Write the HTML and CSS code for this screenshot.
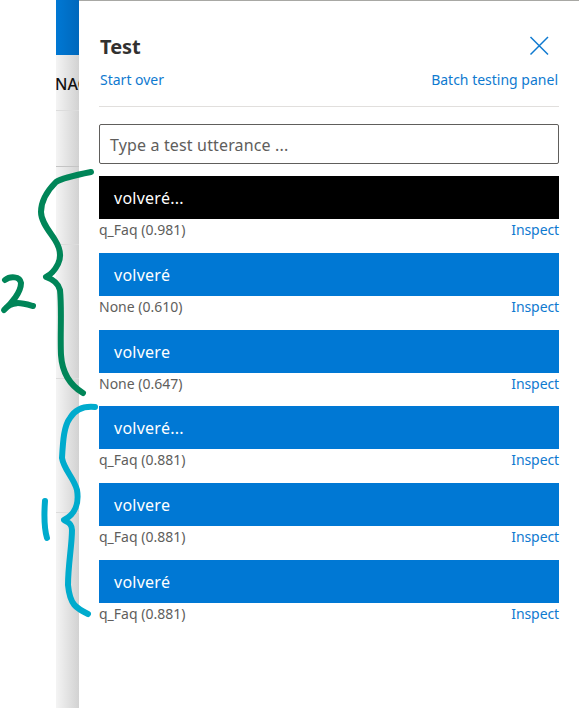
FILE: index.html
```html
<!DOCTYPE html>
<html lang="en">
<head>
<meta charset="utf-8">
<title>Test panel</title>
<link rel="stylesheet" href="styles.css">
</head>
<body>
<div class="page">
  <div class="gutter"></div>
  <div class="strip">
    <div class="strip-blue"></div>
    <div class="strip-nav"><span>NAGE</span></div>
    <div class="strip-row r1"></div>
    <div class="strip-row r2"></div>
    <div class="strip-row r3"></div>
    <div class="strip-row r4"></div>
    <div class="strip-row r5"></div>
  </div>
  <main class="panel">
    <div class="head">
      <div class="title-row">
        <h1 class="title">Test</h1>
        <svg class="close" viewBox="0 0 20 20" width="20" height="20" aria-label="Close"><path d="M1.5 1 L19 18.5 M19 1 L1.5 18.5"/></svg>
      </div>
      <div class="links">
        <a class="link">Start over</a>
        <a class="link">Batch testing panel</a>
      </div>
    </div>
    <div class="field">Type a test utterance ...</div>
    <div class="results">
      <div class="result"><div class="band dark">volveré...</div><div class="meta"><span>q_Faq (0.981)</span><a class="link">Inspect</a></div></div>
      <div class="result"><div class="band">volveré</div><div class="meta"><span>None (0.610)</span><a class="link">Inspect</a></div></div>
      <div class="result"><div class="band">volvere</div><div class="meta"><span>None (0.647)</span><a class="link">Inspect</a></div></div>
      <div class="result tight"><div class="band">volveré...</div><div class="meta"><span>q_Faq (0.881)</span><a class="link">Inspect</a></div></div>
      <div class="result"><div class="band">volvere</div><div class="meta"><span>q_Faq (0.881)</span><a class="link">Inspect</a></div></div>
      <div class="result"><div class="band">volveré</div><div class="meta"><span>q_Faq (0.881)</span><a class="link">Inspect</a></div></div>
    </div>
  </main>
  <svg class="ink" viewBox="0 0 579 708" width="579" height="708" aria-hidden="true">
    <path class="green" d="M91 172 C76 175 62 178 56 182 C48 190 41 200 41 212 C41 222 50 232 55 240 C60 248 62 256 58 264 C55 270 50 275 46 277 C52 279 58 282 60 290 C62 310 60 335 61 355 C62 370 68 384 83 393"/>
    <path class="green" d="M5 280 C10 276 20 276 21 283 C21 292 12 303 4 310 C12 300 22 303 33 306"/>
    <path class="cyan" d="M95 407 C85 406 76 408 70 418 C64 426 63 440 62 458 C64 470 74 478 77 490 C79 502 76 514 64 520 C66 522 72 522 72 530 C72 545 68 565 68 585 C70 605 76 608 88 614"/>
    <path class="cyan" d="M45 501 C44 515 44 528 47 538"/>
  </svg>
</div>
</body>
</html>
```

FILE: styles.css
```css
* { box-sizing: border-box; }
html, body { margin: 0; padding: 0; background: #fff; }
body { font-family: "Noto Sans", "Open Sans", sans-serif; }
.page { position: relative; display: flex; width: 579px; height: 708px; overflow: hidden; }
.gutter { width: 56px; flex: none; background: #fff; }
.strip { width: 23px; flex: none; display: flex; flex-direction: column; overflow: hidden; }
.strip-blue { height: 55px; flex: none; background: linear-gradient(90deg, #0078d4, #0068bc); }
.strip-nav, .strip-row { flex: none; background: linear-gradient(90deg, #f4f4f4, #d2d2d2); border-bottom: 1px solid #dcdcdc; }
.strip-nav { height: 56px; padding-top: 19px; color: #111; font-size: 16px; line-height: 20px; font-weight: 500; white-space: nowrap; }
.strip-nav span { margin-left: -1px; }
.r1 { height: 56px; border-bottom-color: #c4c4c4; }
.r2 { height: 78px; }
.r3 { height: 134px; }
.r4 { height: 134px; }
.r5 { height: 134px; }
.strip-row:last-child { flex: 1; border-bottom: 0; }
.panel { width: 500px; flex: none; background: #fff; border-top: 1px solid #a8a8a4; padding: 0 20px; }
.head { height: 106px; border-bottom: 1px solid #e1dfdd; }
.title-row { display: flex; justify-content: space-between; align-items: flex-start; padding-top: 32px; height: 66px; }
.title { margin: 0 0 0 1px; font-size: 20px; line-height: 28px; font-weight: 700; color: #323130; }
.close { margin: 3px 10px 0 0; fill: none; stroke: #0f7ad0; stroke-width: 1.5; }
.links { display: flex; justify-content: space-between; }
.link { color: #0f7ad0; font-size: 14px; line-height: 26px; }
.links .link:first-child { margin-left: 1px; }
.links .link:last-child { margin-right: 1px; }
.field { margin-top: 17px; height: 40px; border: 1px solid #605e5c; border-radius: 2px; padding: 0 10px; font-size: 16px; line-height: 40px; color: #605e5c; letter-spacing: 0.15px; }
.results { margin-top: 12px; display: flex; flex-direction: column; }
.result { height: 77px; flex: none; }
.result.tight { height: 77px; margin-top: -1px; }
.band { height: 43px; background: #0078d4; color: #fff; font-size: 16px; line-height: 45px; padding-left: 15px; letter-spacing: 0.25px; }
.band.dark { background: #000; }
.meta { display: flex; justify-content: space-between; font-size: 14px; line-height: 21px; color: #605e5c; letter-spacing: 0; }
.meta .link { line-height: 21px; letter-spacing: -0.1px; }
.ink { position: absolute; left: 0; top: 0; fill: none; stroke-width: 6; stroke-linecap: round; stroke-linejoin: round; }
.green { stroke: #008558; }
.cyan { stroke: #00abcd; }
```
